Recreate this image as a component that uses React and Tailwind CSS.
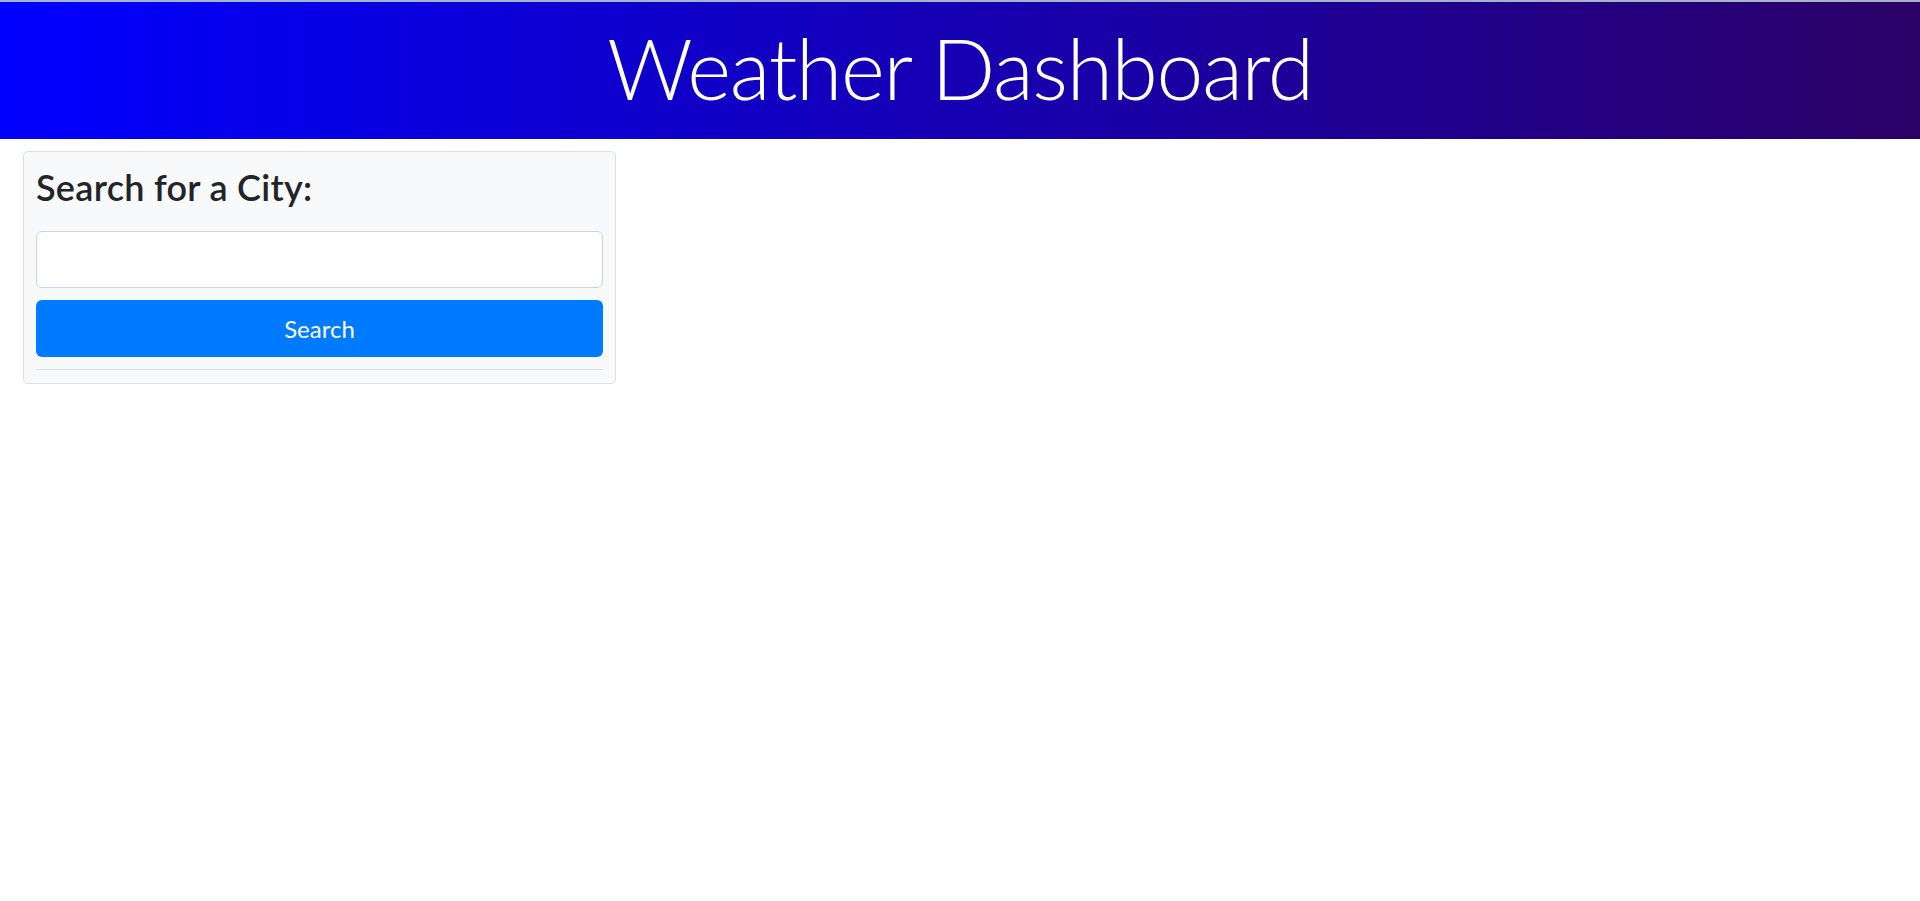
import React from 'react';

const App = () => {
  return (
    <div className="min-h-[901px] bg-white font-['Lato','Liberation_Sans',sans-serif] text-[#212529]">
      {/* Header */}
      <header className="border-t-2 border-[#a3b5c7] bg-linear-to-r/srgb from-[#0000ff] to-[#2b0066]">
        <div className="h-[137px] flex items-center justify-center">
          <h1 className="text-[84px] font-light text-white leading-none tracking-[-1.3px] pb-[6px]">Weather Dashboard</h1>
        </div>
      </header>

      {/* Search panel */}
      <main className="pl-[23px] pt-[12px]">
        <div className="w-[593px] bg-[#f8f9fa] border border-[#dcdfe3] rounded-[5px] px-[12px] pt-[12px] pb-[13px]">
          <h4 className="text-[36px] font-semibold leading-[1.2] tracking-[0.3px] h-[67px] pt-[2px]">Search for a City:</h4>
          <input
            type="text"
            className="block w-full h-[57px] bg-white border border-[#ced4da] rounded-[6px] px-4 text-[24px] outline-none"
          />
          <button className="mt-[12px] w-full h-[57px] bg-[#007bff] text-white text-[24px] rounded-[6px]">
            Search
          </button>
          <hr className="mt-[12px] border-t border-[#dee2e6]" />
        </div>
      </main>
    </div>
  );
};

export default App;
